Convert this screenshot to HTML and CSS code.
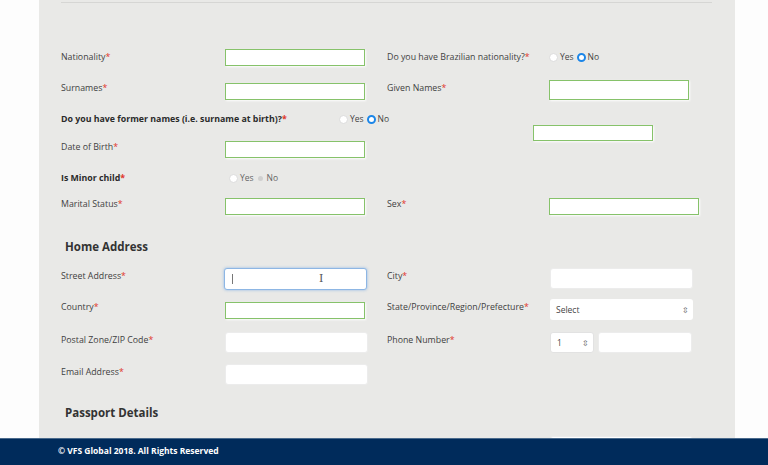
FILE: index.html
```html
<!DOCTYPE html>
<html lang="en">
<head>
    <meta charset="UTF-8">
    <meta name="viewport" content="width=device-width, initial-scale=1.0">
    <title>Applicant Details - VFS Global</title>
    <link rel="stylesheet" href="styles.css">
</head>
<body>
    <div class="panel">
        <hr class="divider">

        <!-- Personal details -->
        <div class="grid personal">
            <label class="lbl">Nationality<span class="req">*</span></label>
            <div><input class="field valid w140" type="text"></div>
            <label class="lbl">Do you have Brazilian nationality?<span class="req">*</span></label>
            <div class="radios">
                <span class="radio"></span>Yes
                <span class="radio checked"></span>No
            </div>

            <label class="lbl">Surnames<span class="req">*</span></label>
            <div><input class="field valid w140 down3" type="text"></div>
            <label class="lbl">Given Names<span class="req">*</span></label>
            <div><input class="field valid w140 tall" type="text"></div>

            <label class="lbl strong span2">Do you have former names (i.e. surname at birth)?<span class="req">*</span></label>
            <div class="radios shift">
                <span class="radio"></span>Yes
                <span class="radio checked"></span>No
            </div>
            <div><input class="field valid w120 stray" type="text"></div>

            <label class="lbl up">Date of Birth<span class="req">*</span></label>
            <div><input class="field valid w140" type="text"></div>
            <div></div>
            <div></div>

            <label class="lbl strong">Is Minor child<span class="req">*</span></label>
            <div class="radios faded">
                <span class="radio"></span>Yes
                <span class="radio dot"></span>No
            </div>
            <div></div>
            <div></div>

            <label class="lbl up">Marital Status<span class="req">*</span></label>
            <div><input class="field valid w140" type="text"></div>
            <label class="lbl up">Sex<span class="req">*</span></label>
            <div><input class="field valid w150" type="text"></div>
        </div>

        <h3 class="section-title home">Home Address</h3>

        <div class="grid address">
            <label class="lbl">Street Address<span class="req">*</span></label>
            <div class="focus-wrap">
                <input class="field plain focused w143" type="text">
                <span class="caret"></span>
                <span class="ibeam">I</span>
            </div>
            <label class="lbl">City<span class="req">*</span></label>
            <div><input class="field plain w143 nudge" type="text"></div>

            <label class="lbl">Country<span class="req">*</span></label>
            <div><input class="field valid w140 down3" type="text"></div>
            <label class="lbl">State/Province/Region/Prefecture<span class="req">*</span></label>
            <div class="select w143 nudge">Select<span class="arrows">&#8691;</span></div>

            <label class="lbl">Postal Zone/ZIP Code<span class="req">*</span></label>
            <div><input class="field plain w143" type="text"></div>
            <label class="lbl">Phone Number<span class="req">*</span></label>
            <div class="phone nudge">
                <div class="select code">1<span class="arrows">&#8691;</span></div>
                <input class="field plain w94" type="text">
            </div>

            <label class="lbl">Email Address<span class="req">*</span></label>
            <div><input class="field plain w143" type="text"></div>
            <div></div>
            <div></div>
        </div>

        <h3 class="section-title">Passport Details</h3>

        <div class="grid passport">
            <div></div>
            <div></div>
            <div></div>
            <div><input class="field plain w143 nudge" type="text"></div>
        </div>
    </div>

    <div class="footer">
        <p>&copy; VFS Global 2018. All Rights Reserved</p>
    </div>
</body>
</html>
```

FILE: styles.css
```css
body {
    font-family: "Open Sans", Arial, sans-serif;
    background-color: #fdfdfd;
    margin: 0;
    padding: 0;
    height: 465px;
    overflow: hidden;
    color: #3f3f3f;
}
.panel {
    margin-left: 39px;
    width: 674px;
    padding: 2px 0 0 22px;
    height: 463px;
    overflow: hidden;
    background-color: #e9e9e7;
}
.divider {
    margin: 0;
    width: 651px;
    border: none;
    border-top: 1px solid #d6d6d4;
}
.grid {
    display: grid;
    grid-template-columns: 164px 162px 162px 1fr;
    align-items: start;
}
.personal {
    margin-top: 46px;
    grid-template-rows: 31px 31px 30px 29px 28px 24px;
}
.address {
    grid-template-rows: 31px 33px 32px 41px;
}
.lbl {
    font-size: 8.8px;
    line-height: 12px;
    padding-top: 2px;
    white-space: nowrap;
}
.lbl.up {
    padding-top: 0;
}
.lbl.strong {
    font-weight: bold;
    color: #2b2b2b;
}
.span2 {
    grid-column: span 2;
}
.req {
    color: #e0352b;
}
.field {
    display: block;
    box-sizing: border-box;
    height: 17px;
    margin: 0;
    padding: 0 6px;
    background: #fff;
    font-family: inherit;
    outline: none;
}
.valid {
    border: 1px solid #86c26a;
    box-shadow: 1px 1px 2px rgba(255, 255, 255, 0.9);
}
.plain {
    height: 21px;
    border: 1px solid #ececec;
    border-radius: 3px;
}
.focused {
    border: 1px solid #8db6e4;
    box-shadow: 0 0 3px rgba(120, 170, 230, 0.8);
}
.tall {
    height: 20px;
}
.down3 {
    margin-top: 3px;
}
.nudge {
    margin-left: 1px;
}
.w94 { width: 94px; }
.w120 { width: 120px; }
.w140 { width: 140px; }
.w143 { width: 143px; }
.w150 { width: 150px; }
.stray {
    margin: 14px 0 0 -16px;
    height: 16px;
}
.radios {
    display: flex;
    align-items: center;
    gap: 2px;
    font-size: 8.5px;
    line-height: 12px;
    padding-top: 2px;
    color: #444;
}
.radios.shift {
    margin-left: -48px;
}
.radios.faded {
    margin-left: 4px;
    color: #666;
}
.radio {
    display: inline-block;
    box-sizing: border-box;
    width: 9px;
    height: 9px;
    border-radius: 50%;
    background: #fff;
    border: 1px solid #dcdcdc;
}
.radio.checked {
    border: 2.5px solid #1c86e8;
    margin-left: 1px;
}
.radio.dot {
    width: 5px;
    height: 5px;
    margin: 0 2px;
    background: #d0d0d0;
    border: none;
}
.section-title {
    margin: 0;
    padding-left: 4px;
    font-size: 11.5px;
    line-height: 16px;
    color: #333;
}
.section-title.home {
    margin: 17px 0 13px;
}
.section-title + .passport {
    margin-top: 15px;
}
.focus-wrap {
    position: relative;
    width: 143px;
    margin-left: -1px;
}
.focus-wrap .field {
    height: 22px;
}
.caret {
    position: absolute;
    left: 8px;
    top: 6px;
    width: 1px;
    height: 10px;
    background: #777;
}
.ibeam {
    position: absolute;
    left: 95px;
    top: 4px;
    font-family: "DejaVu Serif", serif;
    font-size: 11px;
    line-height: 13px;
    color: #555;
}
.select {
    box-sizing: border-box;
    display: flex;
    align-items: center;
    justify-content: space-between;
    height: 21px;
    padding: 0 4px 0 6px;
    background: #fff;
    border-radius: 3px;
    font-size: 8.5px;
    color: #444;
}
.arrows {
    font-size: 8px;
    color: #555;
}
.phone {
    display: flex;
    gap: 4px;
    width: 143px;
}
.select.code {
    width: 44px;
    border: 1px solid #e2e2e2;
}
.footer {
    position: fixed;
    left: 0;
    right: 0;
    bottom: 0;
    height: 26px;
    background-color: #002b5b;
    border-top: 1px solid #4a6a8c;
}
.footer p {
    margin: 0;
    padding: 6px 0 0 58px;
    font-size: 8.5px;
    font-weight: bold;
    color: #fff;
}
```
